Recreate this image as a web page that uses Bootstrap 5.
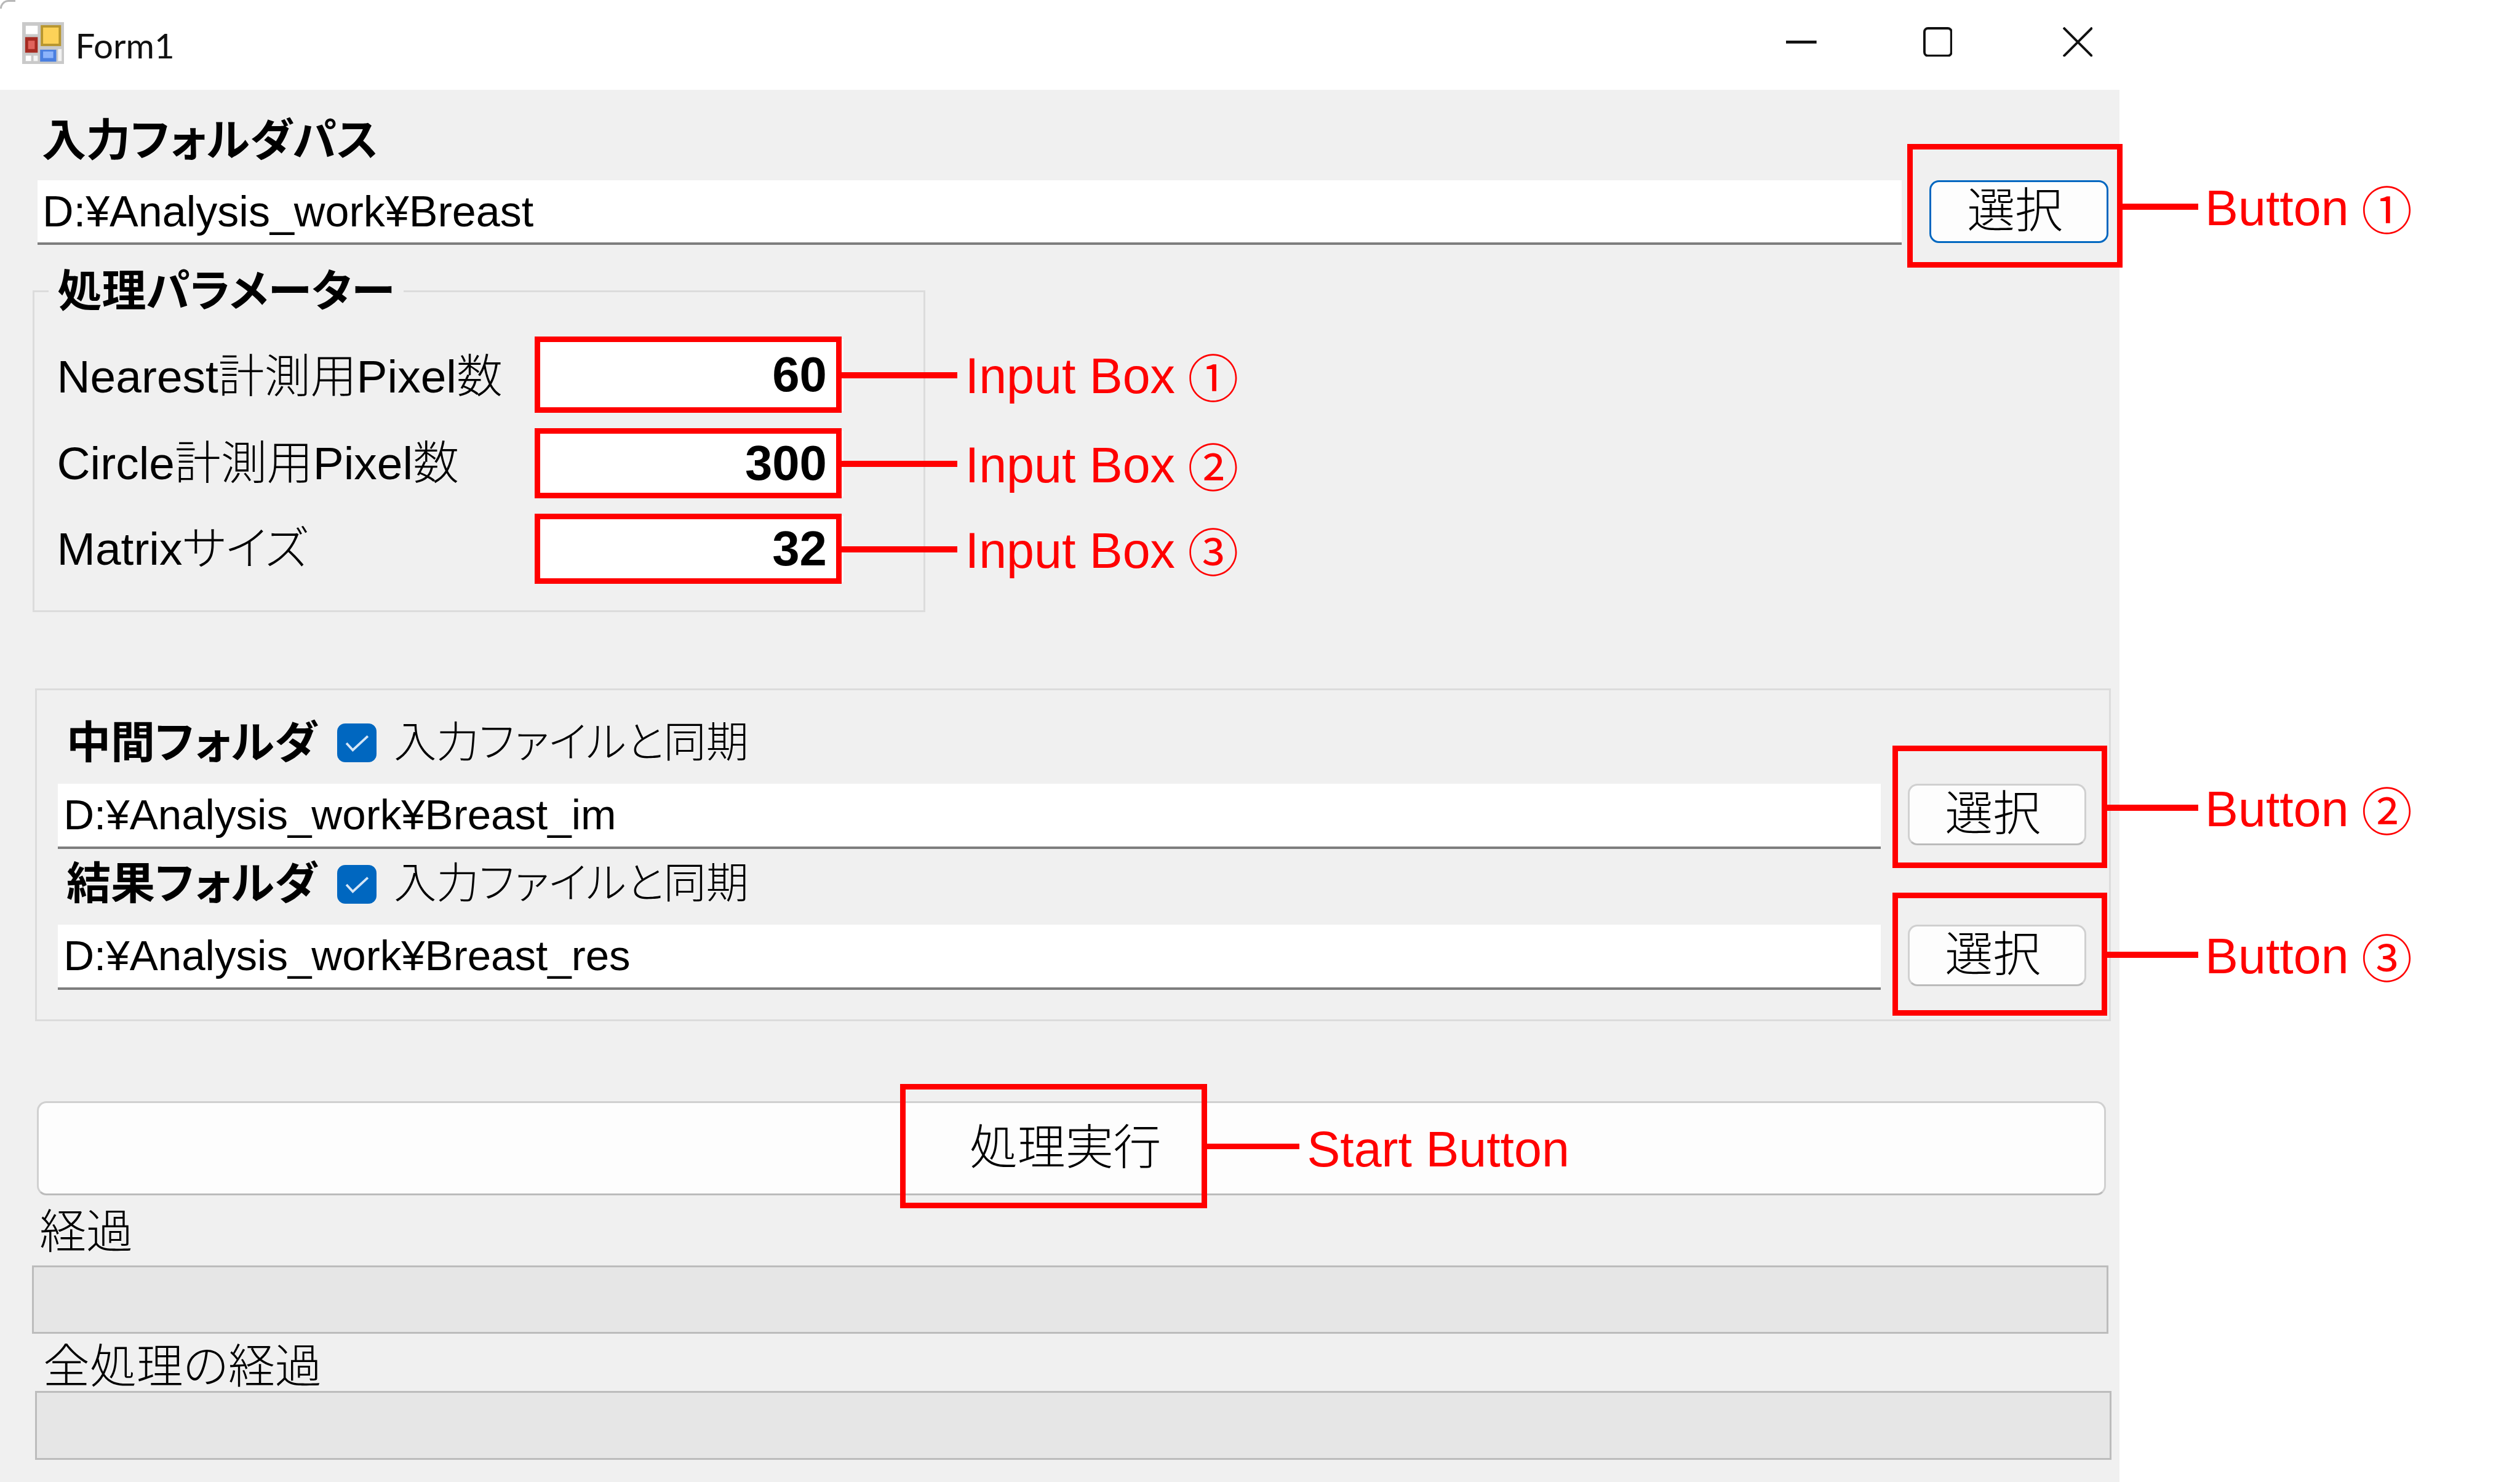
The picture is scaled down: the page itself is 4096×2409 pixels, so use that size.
<!DOCTYPE html>
<html lang="ja">
<head>
<meta charset="utf-8">
<title>Form1</title>
<link rel="stylesheet" href="https://cdn.jsdelivr.net/npm/bootstrap@5.3.0/dist/css/bootstrap.min.css">
<style>
html,body{margin:0;background:#fff;overflow:hidden}
.stage{zoom:.97315;width:4209px;height:2475px;position:relative;background:#fff;color:#000;
  font-family:"Liberation Sans","Noto Sans CJK JP",sans-serif;font-feature-settings:"palt";font-size:76px;line-height:80px}
.winframe{width:3540px;height:2475px;display:flex;flex-direction:column}
.titlebar{height:150px;flex:none;padding-left:37px;padding-right:45px;background:#fff;position:relative}
.titlebar::before{content:"";position:absolute;left:0;top:0;width:26px;height:14px;border-top-left-radius:26px;border-top:4px solid #b8b8b8;border-left:4px solid #b8b8b8}
.appicon{width:70px;height:70px;flex:none;margin-bottom:6px}
.wintitle{font-family:Lato,"Liberation Sans",sans-serif;font-size:58px;line-height:70px;margin-left:19px;color:#111}
.winctl{margin-bottom:10px;flex:none;height:50px}
.ctl-min{margin-left:auto;width:51px}
.ctl-max{margin-left:178px;width:49px}
.ctl-close{margin-left:184px;width:50px}
.formbody{flex:1;background:#f0f0f0;min-height:0}
.heading{font-weight:700;font-size:74px;height:80px;white-space:nowrap}
.h-input{margin:45px 0 26px 70px}
.fld.form-control{display:flex;align-items:center;height:108px;background:#fff;border:0;border-bottom:5px solid #7d7d7d;border-radius:0;
  padding:0 0 0 8px;font-size:72px;line-height:80px;font-weight:300;color:#000;white-space:nowrap}
.row-input{margin-left:63px;width:3459px}
.row-input .fld.form-control{width:3113px;flex:none;padding-top:3px}
.pick.btn{width:299px;height:105px;flex:none;padding:0 14px 0 0;font-size:80px;line-height:80px;font-weight:300;color:#000;background:#fdfdfd;border:4px solid #d0d0d0;border-bottom-color:#bbb;border-radius:16px}
.pick-focus.btn{border-color:#0067c0}
.paramgroup{margin:38px 0 0 54px;width:1492px;border:4px solid #dcdcdc;padding:0 0 47px 36px}
.paramgroup legend{float:none;width:auto;margin:0 0 39px -12px;padding:0 15px;font-size:74px;line-height:80px;font-weight:700;height:80px}
.paramrow{height:110px;margin-top:33px}
.paramrow.first{height:120px;margin-top:0}
.paramlabel{width:803px;flex:none;font-size:77px;font-weight:300;white-space:nowrap;padding:2px 0 0 2px}
.paramrow.first .paramlabel{padding-top:8px}
.numbox.form-control{width:513px;height:100%;background:#fff;border:0;border-radius:0;padding:0 28px 0 0;font-size:82px;line-height:80px;font-weight:700;color:#000;display:flex;align-items:center;justify-content:flex-end}
.foldergroup{margin:128px 0 0 59px;width:3467px;border:4px solid #dcdcdc;padding:48px 0 50px 35px}
.folderhead{height:80px}
.folderhead .heading{margin-left:14px;width:452px;font-size:74px}
.folderhead .form-check-input{width:66px;height:65px;margin:0 29px 0 0;flex:none;background-color:#0067c0;border-color:#0067c0;border-radius:13px;background-size:100% 100%;float:none;
  background-image:url("data:image/svg+xml,%3csvg xmlns='http://www.w3.org/2000/svg' viewBox='0 0 66 65'%3e%3cpath d='M15 33L26 45L52 21' fill='none' stroke='%23d5e6f7' stroke-width='4'/%3e%3c/svg%3e")}
.folderhead .form-check-label{font-size:71px;font-weight:300;white-space:nowrap}
.folderrow{width:3388px;margin-top:28px}
.folderrow .fld{width:3044px;height:109px;flex:none;padding-left:9px;font-size:71px}
.folderhead.second{margin-top:19px}
.folderrow.last{margin-top:27px}
.pick-sm.btn{height:103px}
.startbtn.btn{display:block;margin:133px 0 0 62px;width:3455px;height:158px;background:#fdfdfd;border:4px solid #d0d0d0;border-bottom-color:#bbb;border-radius:16px;padding:0 20px 0 0;font-size:80px;line-height:80px;font-weight:300;color:#000}
.caption{font-size:78px;height:80px;font-weight:300;white-space:nowrap}
.cap-a{margin:21px 0 16px 66px}
.cap-b{margin:15px 0 0 72px}
.bar.progress{height:114px;border:4px solid #bcbcbc;border-radius:0;background:#e6e6e6}
.bar-a.progress{margin-left:53px;width:3469px}
.bar-b.progress{margin-left:59px;width:3468px;height:116px}
.mk{position:absolute;border:10px solid #f00;pointer-events:none}
.mk-b1{left:3186px;top:240px;width:359px;height:207px}
.mk-b2{left:3161px;top:1245px;width:359px;height:205px}
.mk-b3{left:3161px;top:1491px;width:359px;height:206px}
.mk-st{left:1503px;top:1811px;width:513px;height:207px}
.mk-i1{left:893px;top:562px;width:513px;height:128px}
.mk-i2{left:893px;top:715px;width:513px;height:117px}
.mk-i3{left:893px;top:858px;width:513px;height:117px}
.ln{position:absolute;height:10px;background:#f00}
.ln-i{left:1406px;width:193px}
.ln-i1{top:622px}.ln-i2{top:770px}.ln-i3{top:913px}
.ln-b1{left:3545px;width:127px;top:340px}
.ln-b2{left:3520px;width:152px;top:1344px}
.ln-b3{left:3520px;width:152px;top:1590px}
.ln-st{left:2016px;width:154px;top:1910px}
.tag{position:absolute;color:#f00;font-family:"Liberation Sans","Noto Sans CJK JP",sans-serif;font-feature-settings:normal;font-size:83px;line-height:100px;white-space:nowrap}
.tag span{font-family:"Noto Sans CJK JP",sans-serif;font-size:85px;line-height:0;vertical-align:-7px;margin-left:-2px}
.tag-i{left:1612px}
.tag-i1{top:579px}.tag-i2{top:728px}.tag-i3{top:870px}
.tag-b{left:3683px}
.tag-b1{top:298px}.tag-b2{top:1302px}.tag-b3{top:1548px}
.tag-st{left:2183px;top:1870px}
</style>
</head>
<body>
<div class="stage">
  <div class="winframe">
    <div class="titlebar d-flex align-items-center">
      <svg class="appicon" viewBox="0 0 70 70" aria-hidden="true">
        <rect width="70" height="70" fill="#c9c9c9"/>
        <rect x="6" y="6" width="20" height="14" fill="#fff"/>
        <rect x="31" y="5" width="34" height="35" fill="#b8962e"/>
        <rect x="35" y="9" width="26" height="27" fill="#fdd258"/>
        <rect x="5" y="25" width="21" height="26" fill="#a62b22"/>
        <rect x="10" y="31" width="11" height="14" fill="#e0645c"/>
        <rect x="30" y="46" width="27" height="20" fill="#4a7fe0"/>
        <rect x="35" y="49" width="17" height="11" fill="#8db4fb"/>
        <rect x="60" y="45" width="6" height="20" fill="#f2f2f2"/>
        <rect x="6" y="56" width="9" height="9" fill="#fff"/>
        <rect x="19" y="56" width="7" height="9" fill="#f4f4f4"/>
      </svg>
      <span class="wintitle">Form1</span>
      <svg class="winctl ctl-min" viewBox="0 0 51 50" aria-hidden="true"><path d="M0 25H51" stroke="#111" stroke-width="5"/></svg>
      <svg class="winctl ctl-max" viewBox="0 0 49 50" aria-hidden="true"><rect x="2" y="2" width="45" height="46" rx="6" fill="none" stroke="#111" stroke-width="4"/></svg>
      <svg class="winctl ctl-close" viewBox="0 0 50 50" aria-hidden="true"><path d="M1 1L49 49M49 1L1 49" stroke="#111" stroke-width="4"/></svg>
    </div>
    <div class="formbody">
      <div class="heading h-input">入力フォルダパス</div>
      <div class="row-input d-flex justify-content-between">
        <div class="fld form-control">D:¥Analysis_work¥Breast</div>
        <button type="button" class="pick pick-focus btn">選択</button>
      </div>
      <fieldset class="paramgroup">
        <legend>処理パラメーター</legend>
        <div class="paramrow first d-flex align-items-center">
          <label class="paramlabel">Nearest計測用Pixel数</label>
          <div class="numbox form-control">60</div>
        </div>
        <div class="paramrow d-flex align-items-center">
          <label class="paramlabel">Circle計測用Pixel数</label>
          <div class="numbox form-control">300</div>
        </div>
        <div class="paramrow d-flex align-items-center">
          <label class="paramlabel">Matrixサイズ</label>
          <div class="numbox form-control">32</div>
        </div>
      </fieldset>
      <div class="foldergroup">
        <div class="folderhead d-flex align-items-center">
          <div class="heading">中間フォルダ</div>
          <input class="form-check-input" type="checkbox" id="syncA" checked>
          <label class="form-check-label" for="syncA">入力ファイルと同期</label>
        </div>
        <div class="folderrow d-flex justify-content-between">
          <div class="fld form-control">D:¥Analysis_work¥Breast_im</div>
          <button type="button" class="pick pick-sm btn">選択</button>
        </div>
        <div class="folderhead second d-flex align-items-center">
          <div class="heading">結果フォルダ</div>
          <input class="form-check-input" type="checkbox" id="syncB" checked>
          <label class="form-check-label" for="syncB">入力ファイルと同期</label>
        </div>
        <div class="folderrow last d-flex justify-content-between">
          <div class="fld form-control">D:¥Analysis_work¥Breast_res</div>
          <button type="button" class="pick pick-sm btn">選択</button>
        </div>
      </div>
      <button type="button" class="startbtn btn">処理実行</button>
      <div class="caption cap-a">経過</div>
      <div class="bar bar-a progress" role="progressbar" aria-label="経過"></div>
      <div class="caption cap-b">全処理の経過</div>
      <div class="bar bar-b progress" role="progressbar" aria-label="全処理の経過"></div>
    </div>
  </div>

  <div class="mk mk-b1"></div><div class="ln ln-b1"></div><div class="tag tag-b tag-b1">Button <span>①</span></div>
  <div class="mk mk-b2"></div><div class="ln ln-b2"></div><div class="tag tag-b tag-b2">Button <span>②</span></div>
  <div class="mk mk-b3"></div><div class="ln ln-b3"></div><div class="tag tag-b tag-b3">Button <span>③</span></div>
  <div class="mk mk-i1"></div><div class="ln ln-i ln-i1"></div><div class="tag tag-i tag-i1">Input Box <span>①</span></div>
  <div class="mk mk-i2"></div><div class="ln ln-i ln-i2"></div><div class="tag tag-i tag-i2">Input Box <span>②</span></div>
  <div class="mk mk-i3"></div><div class="ln ln-i ln-i3"></div><div class="tag tag-i tag-i3">Input Box <span>③</span></div>
  <div class="mk mk-st"></div><div class="ln ln-st"></div><div class="tag tag-st">Start Button</div>
</div>
<script src="https://cdn.jsdelivr.net/npm/bootstrap@5.3.0/dist/js/bootstrap.bundle.min.js"></script>
</body>
</html>
